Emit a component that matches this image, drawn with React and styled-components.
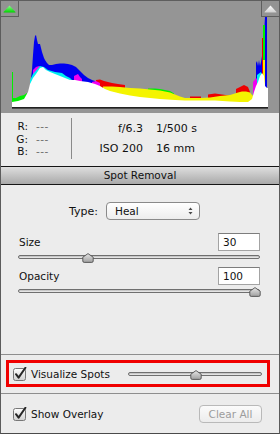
import React from 'react'
import styled, { createGlobalStyle } from 'styled-components'

const GlobalStyle = createGlobalStyle`
  html, body {
    margin: 0;
    padding: 0;
    background: #ececec;
  }
  body {
    font-family: "DejaVu Sans", "Liberation Sans", sans-serif;
    color: #111;
  }
`

const Frame = styled.div`
  width: 280px;
  height: 434px;
  box-sizing: border-box;
  border-left: 1px solid #5c5c5c;
  border-right: 1px solid #5c5c5c;
  border-bottom: 1px solid #4a4a4a;
  display: flex;
  flex-direction: column;
  background: #ececec;
  overflow: hidden;
`

const HistogramBox = styled.div`
  height: 113px;
  box-sizing: border-box;
  border-top: 1px solid #5e5e5e;
  background: #959595;
  display: flex;
  flex-direction: column;
`
const ClipRow = styled.div`
  height: 16px;
  display: flex;
  justify-content: space-between;
`
const ClipButton = styled.div`
  width: 18px;
  height: 16px;
  box-sizing: border-box;
  border-bottom: 1px solid #5e5e5e;
  border-${p => (p.$side === 'left' ? 'right' : 'left')}: 1px solid #5e5e5e;
  display: flex;
  align-items: center;
  justify-content: center;
  background: #939393;
`
const Chart = styled.svg`
  display: block;
  margin-left: 11px;
`

const InfoBox = styled.div`
  height: 53px;
  display: flex;
  padding-top: 5px;
  box-sizing: border-box;
`
const RgbBlock = styled.div`
  width: 71px;
  height: 41px;
  border-right: 1px solid #8a8a8a;
  display: grid;
  grid-template-columns: 27px auto;
  grid-auto-rows: 12.5px;
  column-gap: 8px;
  align-content: start;
  padding-top: 2px;
  box-sizing: border-box;
  font-size: 10.5px;
  line-height: 12.5px;
`
const RgbLabel = styled.span`
  text-align: right;
  color: #111;
`
const Dashes = styled.span`
  color: #6a6a6a;
  letter-spacing: 0.5px;
`
const ExifBlock = styled.div`
  display: grid;
  grid-template-columns: 71px auto;
  grid-auto-rows: 20px;
  column-gap: 13px;
  padding-top: 1px;
  font-size: 11px;
  line-height: 20px;
`
const ExifLeft = styled.span`
  text-align: right;
`

const PanelHeader = styled.div`
  height: 19px;
  box-sizing: border-box;
  border-top: 1px solid #151515;
  border-bottom: 1px solid #151515;
  background: linear-gradient(#dedede, #a9a9a9);
  font-size: 10.5px;
  line-height: 17px;
  text-align: center;
  margin: 0 -1px;
`

const PanelBody = styled.div`
  flex: 1;
  display: flex;
  flex-direction: column;
`
const Controls = styled.div`
  height: 169px;
  padding: 17px 19px 0 17px;
  box-sizing: border-box;
  display: flex;
  flex-direction: column;
`
const TypeRow = styled.div`
  display: flex;
  align-items: center;
  gap: 8px;
  padding-left: 51px;
  font-size: 11px;
`
const Select = styled.div`
  width: 94px;
  height: 18px;
  box-sizing: border-box;
  border: 1px solid #8a8a8a;
  border-radius: 4px;
  background: linear-gradient(#ffffff, #ededed);
  display: flex;
  align-items: center;
  justify-content: space-between;
  padding: 0 6px 0 8px;
  font-size: 10.5px;
`
const FieldRow = styled.div`
  display: flex;
  align-items: center;
  justify-content: space-between;
  margin-top: ${p => p.$gap}px;
  padding-left: 1px;
  font-size: 10.5px;
`
const NumberBox = styled.div`
  width: 42px;
  height: 18px;
  box-sizing: border-box;
  border: 1px solid #a3a3a3;
  border-top-color: #7d7d7d;
  background: #fff;
  padding-left: 4px;
  font-size: 10.5px;
  line-height: 16px;
`
const SliderWrap = styled.div`
  position: relative;
  height: 10px;
  margin-top: ${p => p.$gap || 0}px;
  width: ${p => (p.$width ? `${p.$width}px` : 'auto')};
  display: flex;
  align-items: center;
`
const Track = styled.div`
  width: 100%;
  height: 4px;
  box-sizing: border-box;
  border: 1px solid #6f6f6f;
  border-radius: 2px;
  background: linear-gradient(#b9b9b9, #f2f2f2);
`
const Thumb = styled.svg`
  position: absolute;
  top: 1px;
`

const VisualizeSection = styled.div`
  height: 39px;
  box-sizing: border-box;
  border-top: 1px solid #8e8e8e;
  padding: 5px 9px 0 5px;
`
const Highlight = styled.div`
  height: 27px;
  box-sizing: border-box;
  border: 3px solid #f00000;
  display: flex;
  align-items: center;
  padding: 0 5px 0 4px;
`
const CheckLabel = styled.label`
  display: flex;
  align-items: center;
  gap: 4px;
  font-size: 10.5px;
  flex: ${p => (p.$grow ? 1 : 'none')};
`
const BottomSection = styled.div`
  flex: 1;
  border-top: 1px solid #8e8e8e;
  display: flex;
  align-items: center;
  justify-content: space-between;
  padding: 1px 17px 0 12px;
`
const ClearButton = styled.div`
  width: 63px;
  height: 18px;
  box-sizing: border-box;
  border: 1px solid #b9b9b9;
  border-radius: 4px;
  background: linear-gradient(#fbfbfb, #ececec);
  color: #9c9c9c;
  font-size: 10.5px;
  line-height: 16px;
  text-align: center;
`

function Triangle({ light, dark }) {
  const id = 'tri' + light.replace('#', '')
  return (
    <svg width="13" height="8" viewBox="0 0 13 8">
      <defs>
        <linearGradient id={id} x1="0" y1="0" x2="0" y2="1">
          <stop offset="0" stopColor={light} />
          <stop offset="1" stopColor={dark} />
        </linearGradient>
      </defs>
      <path d="M6.5 0.5 L12.5 7 Q12.5 7.5 12 7.5 L1 7.5 Q0.5 7.5 0.5 7 Z" fill={`url(#${id})`} />
    </svg>
  )
}

function CheckBox() {
  return (
    <svg width="14" height="14" viewBox="0 0 14 14">
      <defs>
        <linearGradient id="cbg" x1="0" y1="0" x2="0" y2="1">
          <stop offset="0" stopColor="#ffffff" />
          <stop offset="1" stopColor="#cfcfcf" />
        </linearGradient>
      </defs>
      <rect x="0.5" y="1.5" width="12" height="12" rx="2" fill="url(#cbg)" stroke="#777" />
      <path d="M3 7.2 L5.6 10.6 L12.4 0.8" fill="none" stroke="#262626" strokeWidth="2" strokeLinecap="round" strokeLinejoin="round" />
    </svg>
  )
}

function Slider({ value, width, gap }) {
  return (
    <SliderWrap $width={width} $gap={gap}>
      <Track />
      <Thumb width="12" height="10" viewBox="0 0 12 10" style={{ left: `calc(${value}% - 6px)` }}>
        <defs>
          <linearGradient id="thumbg" x1="0" y1="0" x2="0" y2="1">
            <stop offset="0" stopColor="#e6e6e6" />
            <stop offset="1" stopColor="#9f9f9f" />
          </linearGradient>
        </defs>
        <path d="M6 0.6 L11.2 4.2 L11.2 8 Q11.2 9.4 9.8 9.4 L2.2 9.4 Q0.8 9.4 0.8 8 L0.8 4.2 Z" fill="url(#thumbg)" stroke="#4f4f4f" strokeWidth="0.9" />
      </Thumb>
    </SliderWrap>
  )
}

function SelectArrows() {
  return (
    <svg width="5" height="8" viewBox="0 0 5 8">
      <path d="M2.5 0.5 L4.5 3 L0.5 3 Z M0.5 5 L4.5 5 L2.5 7.5 Z" fill="#4a4a4a" />
    </svg>
  )
}

const layers = [
  ['#0000f0', '31,109 31,78 32,70 33,55 34,42 35,36 36,35 37,40 38,44 40,44 41,48 42,52 43,55 44,58 45,60 47,63 49,65 52,65 56,64 60,63.5 64,63.5 68,64 72,65 76,67 80,71 84,75 88,78 92,80 95,81 95,109'],
  ['#0000f0', '256,109 256,63 257,61 258,66 259,60 260,66 261,62 262,56 263,44 264,34 265,17 267,17 267,109'],
  ['#ee0000', '96,109 96,80 100,79.5 104,81 108,82 112,83 118,84 125,85 125,109'],
  ['#ee0000', '190,109 190,96.5 201,96.5 201,109'],
  ['#ee0000', '208,109 208,94.5 215,93.5 222,94.5 229,95.5 229,109'],
  ['#ee0000', '236,109 236,89 240,87 244,85 248,87 250,92 250,109'],
  ['#ee0000', '262,109 262,38 263,38 263,109'],
  ['#00f000', '12,109 12,72 13,72 13,98 16,98 20,96 24,95 27,93 27,109'],
  ['#00f000', '148,109 148,88.5 155,88.5 160,89 165,90 170,91 174,93.5 174,109'],
  ['#00f000', '263,109 263,25 265,25 265,109'],
  ['#f000f0', '33,109 33,70 36,67 39,66 42,68 44,72 44,109'],
  ['#f000f0', '74,109 74,76 78,74 80,77 82,79 82,109'],
  ['#f000f0', '92,109 92,82 96,81 100,83 100,109'],
  ['#f000f0', '253,109 253,82 256,78 258,80 258,109'],
  ['#00f0f0', '30,109 30,80 33,74 40,66 44,67 48,70 55,72 62,73 66,76 70,78 72,80 72,109'],
  ['#00f0f0', '257,109 257,75 261,72 263,78 263,109'],
  ['#f4f400', '103,109 103,86.5 112,86.5 120,87 130,88 140,88.5 150,89.5 160,90.5 170,92.5 175,94.5 180,96.5 185,98 200,98 210,97.5 220,96 230,95 238,92.5 242,91.5 246,91.5 250,92.5 252,95 255,97 255,109'],
  ['#f4f400', '263,109 263,60 265,60 265,109'],
  ['#ffffff', '12,109 12,102 18,101 24,99 28,92 30,84 33,78 36,74 40,68 43,67 46,70 50,72 55,74 60,76 65,78 70,80 75,80 80,81 88,82 95,84 100,86 105,89 110,91 120,93.5 130,95.5 140,97 150,98 160,99 175,100 185,100.5 200,100.5 215,100.5 230,101.5 240,102 248,102 252,99 254,92 256,86 258,82 260,76 262,73 264,76 265,86 267,88 268,88 268,109'],
]

function Histogram() {
  return (
    <Chart width="256" height="96" viewBox="12 17 256 96">
      {layers.map(([color, pts], i) => (
        <polygon key={i} points={pts} fill={color} />
      ))}
      <rect x="12" y="107.2" width="256" height="5.8" fill="#959595" />
      <rect x="12" y="107.2" width="256" height="1.3" fill="#000" />
    </Chart>
  )
}

export default function App() {
  return (
    <>
      <GlobalStyle />
      <Frame>
        <HistogramBox>
          <ClipRow>
            <ClipButton $side="left">
              <Triangle light="#8dff8d" dark="#00d400" />
            </ClipButton>
            <ClipButton $side="right">
              <Triangle light="#ffffff" dark="#cfcfcf" />
            </ClipButton>
          </ClipRow>
          <Histogram />
        </HistogramBox>

        <InfoBox>
          <RgbBlock>
            <RgbLabel>R:</RgbLabel><Dashes>---</Dashes>
            <RgbLabel>G:</RgbLabel><Dashes>---</Dashes>
            <RgbLabel>B:</RgbLabel><Dashes>---</Dashes>
          </RgbBlock>
          <ExifBlock>
            <ExifLeft>f/6.3</ExifLeft><span>1/500 s</span>
            <ExifLeft>ISO 200</ExifLeft><span>16 mm</span>
          </ExifBlock>
        </InfoBox>

        <PanelHeader>Spot Removal</PanelHeader>

        <PanelBody>
          <Controls>
            <TypeRow>
              <span>Type:</span>
              <Select>
                <span>Heal</span>
                <SelectArrows />
              </Select>
            </TypeRow>
            <FieldRow $gap={13}>
              <span>Size</span>
              <NumberBox>30</NumberBox>
            </FieldRow>
            <Slider value={29} gap={1} />
            <FieldRow $gap={5}>
              <span>Opacity</span>
              <NumberBox>100</NumberBox>
            </FieldRow>
            <Slider value={98} gap={1} />
          </Controls>

          <VisualizeSection>
            <Highlight>
              <CheckLabel $grow>
                <CheckBox />
                Visualize Spots
              </CheckLabel>
              <Slider value={51} width={134} />
            </Highlight>
          </VisualizeSection>

          <BottomSection>
            <CheckLabel>
              <CheckBox />
              Show Overlay
            </CheckLabel>
            <ClearButton>Clear All</ClearButton>
          </BottomSection>
        </PanelBody>
      </Frame>
    </>
  )
}
